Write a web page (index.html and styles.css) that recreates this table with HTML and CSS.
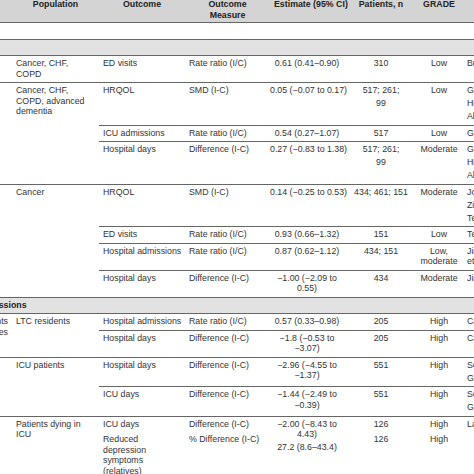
FILE: index.html
```html
<!DOCTYPE html>
<html lang="en">
<head>
<meta charset="utf-8">
<title>Evidence table</title>
<link rel="stylesheet" href="styles.css">
</head>
<body>
<table class="evidence">
  <colgroup>
    <col class="c-int"><col class="c-pop"><col class="c-out"><col class="c-meas"><col class="c-est"><col class="c-n"><col class="c-grade"><col class="c-ref">
  </colgroup>
  <thead>
    <tr>
      <th>Setting</th>
      <th>Population</th>
      <th>Outcome</th>
      <th>Outcome<br>Measure</th>
      <th>Estimate (95% CI)</th>
      <th>Patients, n</th>
      <th>GRADE</th>
      <th>References</th>
    </tr>
  </thead>
  <tbody>
    <tr class="section"><td colspan="8">Care models</td></tr>
    <tr class="band"><td colspan="8">Home care</td></tr>

    <tr>
      <td></td>
      <td class="pop">Cancer, CHF, COPD</td>
      <td class="out">ED visits</td>
      <td class="meas">Rate ratio (I/C)</td>
      <td class="est">0.61 (0.41–0.90)</td>
      <td class="n">310</td>
      <td class="grade">Low</td>
      <td class="ref"><div>Brumley et al.</div></td>
    </tr>

    <tr>
      <td rowspan="3"></td>
      <td rowspan="3" class="pop">Cancer, CHF, COPD, advanced dementia</td>
      <td class="out">HRQOL</td>
      <td class="meas">SMD (I-C)</td>
      <td class="est">0.05 (−0.07 to 0.17)</td>
      <td class="n"><div class="stack"><div>517; 261;</div><div>99</div></div></td>
      <td class="grade">Low</td>
      <td class="ref"><div class="stack"><div>Gade et al.</div><div>Higginson et al.</div><div>Abernethy et al.</div></div></td>
    </tr>
    <tr>
      <td class="out">ICU admissions</td>
      <td class="meas">Rate ratio (I/C)</td>
      <td class="est">0.54 (0.27–1.07)</td>
      <td class="n">517</td>
      <td class="grade">Low</td>
      <td class="ref"><div>Gade et al.</div></td>
    </tr>
    <tr>
      <td class="out">Hospital days</td>
      <td class="meas">Difference (I-C)</td>
      <td class="est">0.27 (−0.83 to 1.38)</td>
      <td class="n"><div class="stack"><div>517; 261;</div><div>99</div></div></td>
      <td class="grade">Moderate</td>
      <td class="ref"><div class="stack"><div>Gade et al.</div><div>Higginson et al.</div><div>Abernethy et al.</div></div></td>
    </tr>

    <tr>
      <td rowspan="4"></td>
      <td rowspan="4" class="pop">Cancer</td>
      <td class="out">HRQOL</td>
      <td class="meas">SMD (I-C)</td>
      <td class="est">0.14 (−0.25 to 0.53)</td>
      <td class="n">434; 461; 151</td>
      <td class="grade">Moderate</td>
      <td class="ref"><div class="stack"><div>Jordhøy et al.</div><div>Zimmermann et al.</div><div>Temel et al.</div></div></td>
    </tr>
    <tr>
      <td class="out">ED visits</td>
      <td class="meas">Rate ratio (I/C)</td>
      <td class="est">0.93 (0.66–1.32)</td>
      <td class="n">151</td>
      <td class="grade">Low</td>
      <td class="ref"><div>Temel et al.</div></td>
    </tr>
    <tr>
      <td class="out">Hospital admissions</td>
      <td class="meas">Rate ratio (I/C)</td>
      <td class="est">0.87 (0.62–1.12)</td>
      <td class="n">434; 151</td>
      <td class="grade">Low,<br>moderate</td>
      <td class="ref"><div>Jiang 2016; Temel<br>et al. 2010</div></td>
    </tr>
    <tr>
      <td class="out">Hospital days</td>
      <td class="meas">Difference (I-C)</td>
      <td class="est">−1.00 (−2.09 to<br>0.55)</td>
      <td class="n">434</td>
      <td class="grade">Moderate</td>
      <td class="ref"><div>Jiang 2016</div></td>
    </tr>

    <tr class="band"><td colspan="8">Hospital admissions</td></tr>

    <tr>
      <td rowspan="2" class="int">ACP, patients<br>in care homes</td>
      <td rowspan="2" class="pop">LTC residents</td>
      <td class="out">Hospital admissions</td>
      <td class="meas">Rate ratio (I/C)</td>
      <td class="est">0.57 (0.33–0.98)</td>
      <td class="n">205</td>
      <td class="grade">High</td>
      <td class="ref"><div>Caplan et al.</div></td>
    </tr>
    <tr>
      <td class="out">Hospital days</td>
      <td class="meas">Difference (I-C)</td>
      <td class="est">−1.8 (−0.53 to<br>−3.07)</td>
      <td class="n">205</td>
      <td class="grade">High</td>
      <td class="ref"><div>Caplan et al.</div></td>
    </tr>

    <tr>
      <td rowspan="2"></td>
      <td rowspan="2" class="pop">ICU patients</td>
      <td class="out">Hospital days</td>
      <td class="meas">Difference (I-C)</td>
      <td class="est">−2.96 (−4.55 to<br>−1.37)</td>
      <td class="n">551</td>
      <td class="grade">High</td>
      <td class="ref"><div class="stack"><div>Schneiderman et al.</div><div>Gilmer et al.</div></div></td>
    </tr>
    <tr>
      <td class="out">ICU days</td>
      <td class="meas">Difference (I-C)</td>
      <td class="est">−1.44 (−2.49 to<br>−0.39)</td>
      <td class="n">551</td>
      <td class="grade">High</td>
      <td class="ref"><div class="stack"><div>Schneiderman et al.</div><div>Gilmer et al.</div></div></td>
    </tr>

    <tr class="open">
      <td rowspan="2"></td>
      <td rowspan="2" class="pop">Patients dying in ICU</td>
      <td class="out">ICU days</td>
      <td class="meas">Difference (I-C)</td>
      <td rowspan="2" class="est"><div class="stack"><div>−2.00 (−8.43 to<br>4.43)</div><div>27.2 (8.6–43.4)</div></div></td>
      <td class="n">126</td>
      <td class="grade">High</td>
      <td rowspan="2" class="ref"><div>Lautrette et al.</div></td>
    </tr>
    <tr>
      <td class="out">Reduced<br>depression<br>symptoms<br>(relatives)</td>
      <td class="meas">% Difference (I-C)</td>
      <td class="n">126</td>
      <td class="grade">High</td>
    </tr>
  </tbody>
</table>
</body>
</html>
```

FILE: styles.css
```css
html,
body {
  margin: 0;
  padding: 0;
  overflow: hidden;
  background: #ffffff;
}

body {
  font-family: "Liberation Sans", Arial, sans-serif;
  font-size: 8.8px;
  line-height: 10.5px;
  color: #333333;
}

.evidence {
  border-collapse: collapse;
  table-layout: fixed;
  width: 653px;
  margin: -3px 0 0 -63px;
}

.c-int { width: 75px; }
.c-pop { width: 87px; }
.c-out { width: 86px; }
.c-meas { width: 85px; }
.c-est { width: 74px; }
.c-n { width: 74px; }
.c-grade { width: 42px; }
.c-ref { width: 130px; }

.evidence th,
.evidence td {
  padding: 2px 4px 3px 4px;
  vertical-align: top;
  text-align: left;
  font-weight: normal;
  border-bottom: 1px solid #666666;
}

.evidence th {
  background: #d4d4d4;
  color: #222222;
  font-weight: bold;
  text-align: center;
  padding-bottom: 2px;
  white-space: nowrap;
}

.section td {
  font-weight: bold;
  color: #222222;
  white-space: nowrap;
}

.band td {
  background: #e2e2e2;
  font-weight: bold;
  color: #222222;
  white-space: nowrap;
}

.evidence td.int {
  text-align: right;
  white-space: nowrap;
}

.evidence td.pop {
  padding-right: 8px;
}

.evidence td.out,
.evidence td.meas {
  white-space: nowrap;
  padding-right: 2px;
}

.evidence td.est,
.evidence td.n,
.evidence td.grade {
  text-align: center;
  white-space: nowrap;
  padding-left: 0;
  padding-right: 0;
}

.evidence td.ref {
  white-space: nowrap;
  padding-left: 7px;
  padding-right: 0;
}

.stack > div + div {
  margin-top: 2.5px;
}

.open td {
  border-bottom: none;
}
```
